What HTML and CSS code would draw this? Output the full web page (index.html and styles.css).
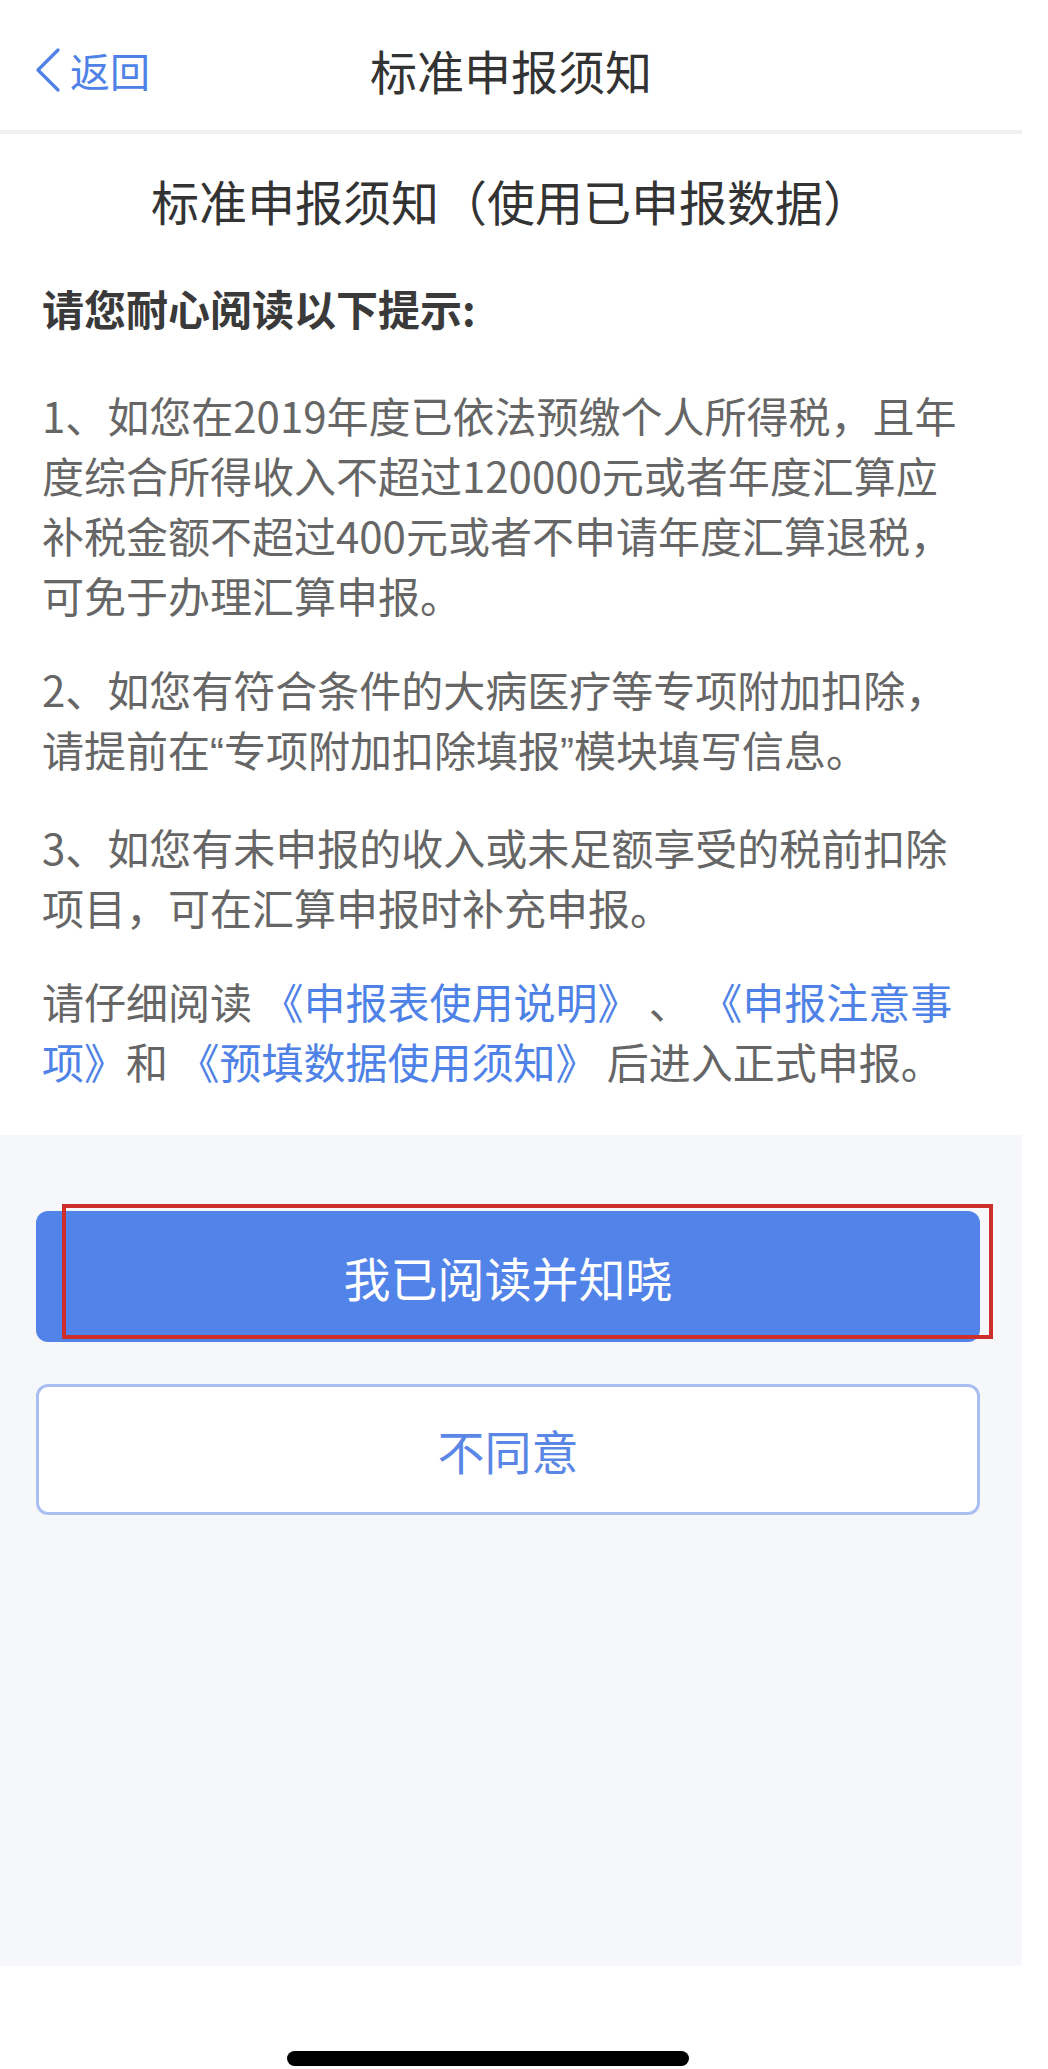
FILE: index.html
```html
<!DOCTYPE html>
<html lang="zh-CN">
<head>
<meta charset="utf-8">
<title>标准申报须知</title>
<link rel="stylesheet" href="styles.css">
</head>
<body>
<div class="screen">
  <header class="navbar">
    <a class="back" href="#">
      <svg class="chevron" width="28" height="44" viewBox="0 0 28 44"><polyline points="24,2 4,22 24,42" fill="none" stroke="#4f82e6" stroke-width="3.2" stroke-linecap="round" stroke-linejoin="round"/></svg>
      <span>返回</span>
    </a>
    <h1 class="nav-title">标准申报须知</h1>
    <span class="nav-spacer"></span>
  </header>

  <main class="content">
    <h2 class="subtitle">标准申报须知（使用已申报数据）</h2>
    <p class="lead">请您耐心阅读以下提示:</p>
    <p class="para">1、如您在2019年度已依法预缴个人所得税，且年度综合所得收入不超过120000元或者年度汇算应补税金额不超过400元或者不申请年度汇算退税，可免于办理汇算申报。</p>
    <p class="para">2、如您有符合条件的大病医疗等专项附加扣除，请提前在<span class="q">“</span>专项附加扣除填报<span class="q">”</span>模块填写信息。</p>
    <p class="para">3、如您有未申报的收入或未足额享受的税前扣除项目，可在汇算申报时补充申报。</p>
    <p class="para">请仔细阅读 <a class="link" href="#">《申报表使用说明》</a> 、 <a class="link" href="#">《申报注意事项》</a>和 <a class="link" href="#">《预填数据使用须知》</a> 后进入正式申报。</p>
  </main>

  <section class="actions">
    <div class="primary-wrap">
      <button class="btn btn-primary">我已阅读并知晓</button>
      <span class="mark"></span>
    </div>
    <button class="btn btn-outline">不同意</button>
  </section>

  <footer class="home-area">
    <span class="home-bar"></span>
  </footer>
</div>
</body>
</html>
```

FILE: styles.css
```css
html, body {
  margin: 0;
  padding: 0;
  background: #ffffff;
}

body {
  font-family: "Noto Sans CJK SC", "Noto Sans", sans-serif;
  color: #666666;
}

.screen {
  width: 1022px;
  display: flex;
  flex-direction: column;
}

.navbar {
  height: 130px;
  border-bottom: 4px solid #eff0f2;
  display: grid;
  grid-template-columns: 1fr auto 1fr;
  align-items: center;
}

.back {
  display: flex;
  align-items: center;
  gap: 8px;
  padding-left: 34px;
  color: #4f82e6;
  text-decoration: none;
  font-size: 40px;
  line-height: 44px;
  padding-top: 10px;
}

.chevron {
  display: block;
}

.nav-title {
  margin: 0;
  padding-top: 10px;
  font-size: 47px;
  font-weight: 400;
  color: #333333;
  line-height: 60px;
  text-align: center;
}

.content {
  padding: 36px 62px 44px 42px;
}

.subtitle {
  margin: 0 -20px 48px 0;
  font-size: 48px;
  line-height: 60px;
  font-weight: 400;
  color: #333333;
  text-align: center;
}

.lead {
  margin: 0 0 47px;
  font-size: 42px;
  line-height: 60px;
  font-weight: 700;
  color: #3a3a3a;
}

.para {
  margin: 0 0 34px;
  font-size: 42px;
  line-height: 60px;
  color: #666666;
}

.para:last-child {
  margin-bottom: 0;
}

.q {
  font-family: "Liberation Sans", "Noto Sans", sans-serif;
}

.link {
  color: #4f82e6;
  text-decoration: none;
}

.actions {
  background: #f5f7fa;
  height: 831px;
  box-sizing: border-box;
  padding: 76px 42px 0 36px;
  display: flex;
  flex-direction: column;
  gap: 42px;
}

.primary-wrap {
  position: relative;
}

.btn {
  display: block;
  width: 100%;
  height: 131px;
  border-radius: 12px;
  font-family: "Noto Sans CJK SC", "Noto Sans", sans-serif;
  font-size: 47px;
  cursor: pointer;
}

.btn-primary {
  background: #5283e8;
  color: #ffffff;
  border: none;
}

.btn-outline {
  background: #ffffff;
  color: #5a87e6;
  border: 3px solid #a9bff2;
}

.mark {
  position: absolute;
  left: 26px;
  top: -7px;
  width: 931px;
  height: 135px;
  box-sizing: border-box;
  border: 4px solid #cf2f2a;
  pointer-events: none;
}

.home-area {
  height: 104px;
  display: flex;
  align-items: flex-start;
}

.home-bar {
  display: block;
  margin-top: 85px;
  margin-left: 287px;
  width: 402px;
  height: 15px;
  border-radius: 8px;
  background: #000000;
}
```
